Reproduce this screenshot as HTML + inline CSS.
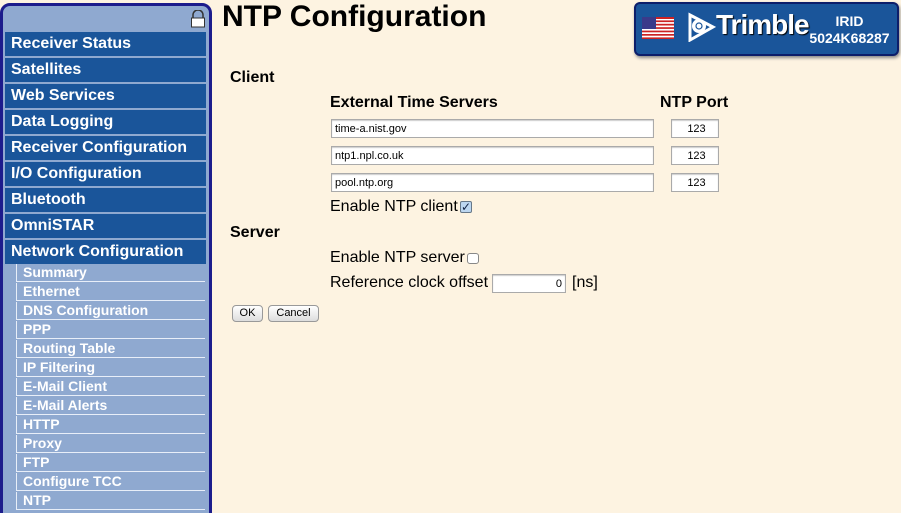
<!DOCTYPE html>
<html style="width:901px;height:513px;overflow:hidden"><head><meta charset="utf-8"><style>
*{margin:0;padding:0;box-sizing:border-box}
body{width:901px;height:513px;overflow:hidden;background:#fdf3e1;font-family:"Liberation Sans",Arial,sans-serif;position:relative}
.a{position:absolute}
#side{left:0;top:3px;width:212px;height:520px;background:#8fa9d0;border:3px solid #1c1c8c;border-radius:10px}
.m{position:absolute;left:5px;width:201px;height:24px;background:#1a559a;color:#fff;font-weight:bold;font-size:16px;line-height:24px;padding-left:6px}
.s{position:absolute;left:16px;width:189px;height:18px;background:#8fa9d0;border-bottom:1px solid #e8eef8;border-left:1px solid #e8eef8;color:#fff;font-weight:bold;font-size:14px;line-height:17px;padding-left:6px}
h1{position:absolute;left:222px;top:0;font-size:30px;font-weight:bold;color:#000}
.b{font-weight:bold;font-size:16px}
.t{font-size:16px}
input[type=text]{position:absolute;height:19px;border:1px solid #aaa;box-shadow:inset 0 1px 1px #ccc;background:#fff;font-family:"Liberation Sans",sans-serif;font-size:11px;padding-left:3px}
.btn{position:absolute;height:17px;border:1px solid #999;border-radius:4px;background:linear-gradient(#fff,#ddd);font-size:11px;text-align:center;line-height:15px}
</style></head><body>
<div id="side" class="a"></div>
<svg class="a" style="left:190px;top:10px" width="16" height="18" viewBox="0 0 16 18"><path d="M3 8V5a5 5 0 0 1 10 0v3" fill="none" stroke="#333" stroke-width="1.5"/><rect x="1.5" y="8" width="13" height="9" fill="#fff" stroke="#333"/></svg>
<div class="m" style="top:32px">Receiver Status</div>
<div class="m" style="top:58px">Satellites</div>
<div class="m" style="top:84px">Web Services</div>
<div class="m" style="top:110px">Data Logging</div>
<div class="m" style="top:136px">Receiver Configuration</div>
<div class="m" style="top:162px">I/O Configuration</div>
<div class="m" style="top:188px">Bluetooth</div>
<div class="m" style="top:214px">OmniSTAR</div>
<div class="m" style="top:240px">Network Configuration</div>
<div class="s" style="top:264px">Summary</div>
<div class="s" style="top:283px">Ethernet</div>
<div class="s" style="top:302px">DNS Configuration</div>
<div class="s" style="top:321px">PPP</div>
<div class="s" style="top:340px">Routing Table</div>
<div class="s" style="top:359px">IP Filtering</div>
<div class="s" style="top:378px">E-Mail Client</div>
<div class="s" style="top:397px">E-Mail Alerts</div>
<div class="s" style="top:416px">HTTP</div>
<div class="s" style="top:435px">Proxy</div>
<div class="s" style="top:454px">FTP</div>
<div class="s" style="top:473px">Configure TCC</div>
<div class="s" style="top:492px">NTP</div>
<h1>NTP Configuration</h1>
<div class="a" style="left:634px;top:2px;width:265px;height:54px;background:#1a559a;border:2px solid #0c1e6a;border-radius:6px;box-shadow:1px 2px 3px #888"></div>
<svg class="a" style="left:642px;top:17px" width="32" height="22" viewBox="0 0 32 22"><rect width="32" height="22" fill="#fff"/><g fill="#c22">
<rect y="0" width="32" height="2"/><rect y="3.4" width="32" height="1.7"/><rect y="6.8" width="32" height="1.7"/><rect y="10.2" width="32" height="1.7"/><rect y="13.6" width="32" height="1.7"/><rect y="17" width="32" height="1.7"/><rect y="20.4" width="32" height="1.6"/></g><rect width="14" height="12" fill="#3a3a8a"/></svg>
<svg class="a" style="left:686px;top:12px" width="30" height="30" viewBox="0 0 30 30"><path d="M4 3 L27 15 L4 28 Z" fill="none" stroke="#fff" stroke-width="3"/><circle cx="13" cy="14" r="7" fill="#fff"/><circle cx="13" cy="14" r="3" fill="none" stroke="#1a559a" stroke-width="1.2"/></svg>
<div class="a" style="left:716px;top:9px;color:#fff;font-weight:bold;font-size:28px;letter-spacing:-1px;text-shadow:1px 1px 1px #000">Trimble</div>
<div class="a" style="left:802px;top:13px;width:95px;text-align:center;color:#fff;font-weight:bold;font-size:14px;line-height:17px">IRID<br>5024K68287</div>
<div class="a b" style="left:230px;top:69px">Client</div>
<div class="a b" style="left:330px;top:94px">External Time Servers</div>
<div class="a b" style="left:660px;top:94px">NTP Port</div>
<input type="text" style="left:331px;top:119px;width:323px" value="time-a.nist.gov">
<input type="text" style="left:671px;top:119px;width:48px;text-align:center" value="123">
<input type="text" style="left:331px;top:146px;width:323px" value="ntp1.npl.co.uk">
<input type="text" style="left:671px;top:146px;width:48px;text-align:center" value="123">
<input type="text" style="left:331px;top:173px;width:323px" value="pool.ntp.org">
<input type="text" style="left:671px;top:173px;width:48px;text-align:center" value="123">
<div class="a t" style="left:330px;top:198px">Enable NTP client</div>
<div class="a" style="left:460px;top:201px;width:12px;height:12px;border:1px solid #678;border-radius:2px;background:#bcd6f0;font-size:12px;line-height:10px;color:#124;text-align:center">✓</div>
<div class="a b" style="left:230px;top:224px">Server</div>
<div class="a t" style="left:330px;top:249px">Enable NTP server</div>
<div class="a" style="left:467px;top:253px;width:12px;height:11px;border:1px solid #888;border-radius:3px;background:#fff"></div>
<div class="a t" style="left:330px;top:274px">Reference clock offset</div>
<input type="text" style="left:492px;top:274px;width:74px;text-align:right;padding-right:3px" value="0">
<div class="a t" style="left:572px;top:274px">[ns]</div>
<div class="btn" style="left:232px;top:305px;width:31px">OK</div>
<div class="btn" style="left:268px;top:305px;width:51px">Cancel</div>
</body></html>
